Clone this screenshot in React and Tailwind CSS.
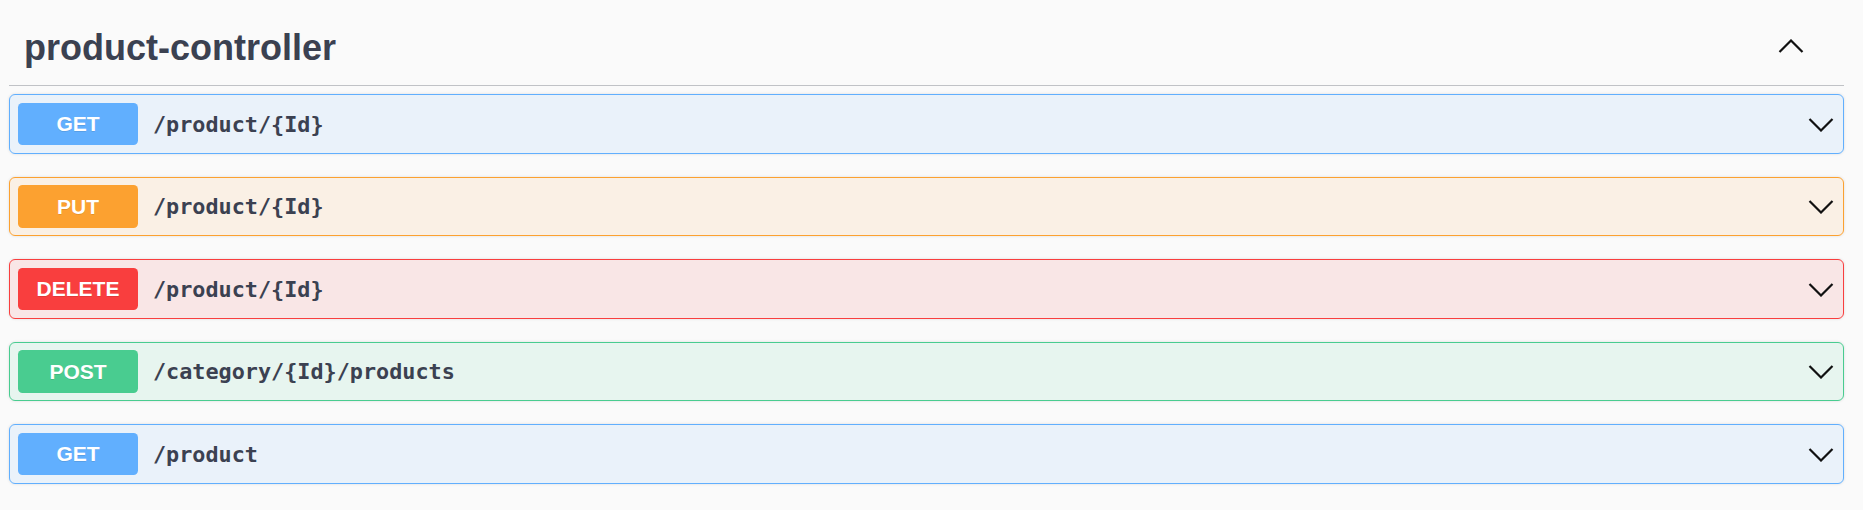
import React from "react";

const operations = [
    { method: "GET", path: "/product/{Id}", badge: "bg-[#61affe]", box: "border-[#61affe] bg-[rgba(97,175,254,0.1)]" },
    { method: "PUT", path: "/product/{Id}", badge: "bg-[#fca130]", box: "border-[#fca130] bg-[rgba(252,161,48,0.1)]" },
    { method: "DELETE", path: "/product/{Id}", badge: "bg-[#f93e3e]", box: "border-[#f93e3e] bg-[rgba(249,62,62,0.1)]" },
    { method: "POST", path: "/category/{Id}/products", badge: "bg-[#49cc90]", box: "border-[#49cc90] bg-[rgba(73,204,144,0.1)]" },
    { method: "GET", path: "/product", badge: "bg-[#61affe]", box: "border-[#61affe] bg-[rgba(97,175,254,0.1)]" },
];

function Chevron({ up }) {
    return (
        <svg width="26" height="14" viewBox="0 0 26 14" fill="none" className="shrink-0">
            <path
                d={up ? "M1.5 13 L13 1.5 L24.5 13" : "M1.5 1 L13 12.5 L24.5 1"}
                stroke="#111"
                strokeWidth="2.2"
            />
        </svg>
    );
}

function Operation({ op }) {
    return (
        <div className={`flex items-center h-[59.5px] mb-[23px] border rounded-[6px] px-[8px] shadow-[0_0_3px_rgba(0,0,0,0.12)] ${op.box}`}>
            <div
                className={`w-[120px] h-[42.5px] rounded-[4.5px] flex items-center justify-center text-white font-bold text-[21px] font-['Liberation_Sans',Arial,sans-serif] [text-shadow:0_1px_0_rgba(0,0,0,0.1)] ${op.badge}`}
            >
                {op.method}
            </div>
            <span className="ml-[15px] mt-[3px] text-[21.8px] font-bold text-[#3b4151] font-['DejaVu_Sans_Mono',monospace]">
                {op.path}
            </span>
            <div className="ml-auto mr-[1px] mt-[2px] flex items-center">
                <Chevron />
            </div>
        </div>
    );
}

export default function App() {
    return (
        <div className="min-h-screen bg-[#fafafa] pl-[9px] pr-[19.5px] pt-[9.5px]">
            <div className="flex items-center border-b border-[rgba(59,65,81,0.3)] py-[15px] pl-[15px]">
                <h4 className="text-[36px] leading-[45px] font-bold text-[#3b4151] font-['Liberation_Sans',Arial,sans-serif]">
                    product-controller
                </h4>
                <div className="ml-auto mr-[40px] -mt-[2px] flex items-center">
                    <Chevron up />
                </div>
            </div>
            <div className="mt-[8.5px]">
                {operations.map((op, i) => (
                    <Operation key={i} op={op} />
                ))}
            </div>
        </div>
    );
}
